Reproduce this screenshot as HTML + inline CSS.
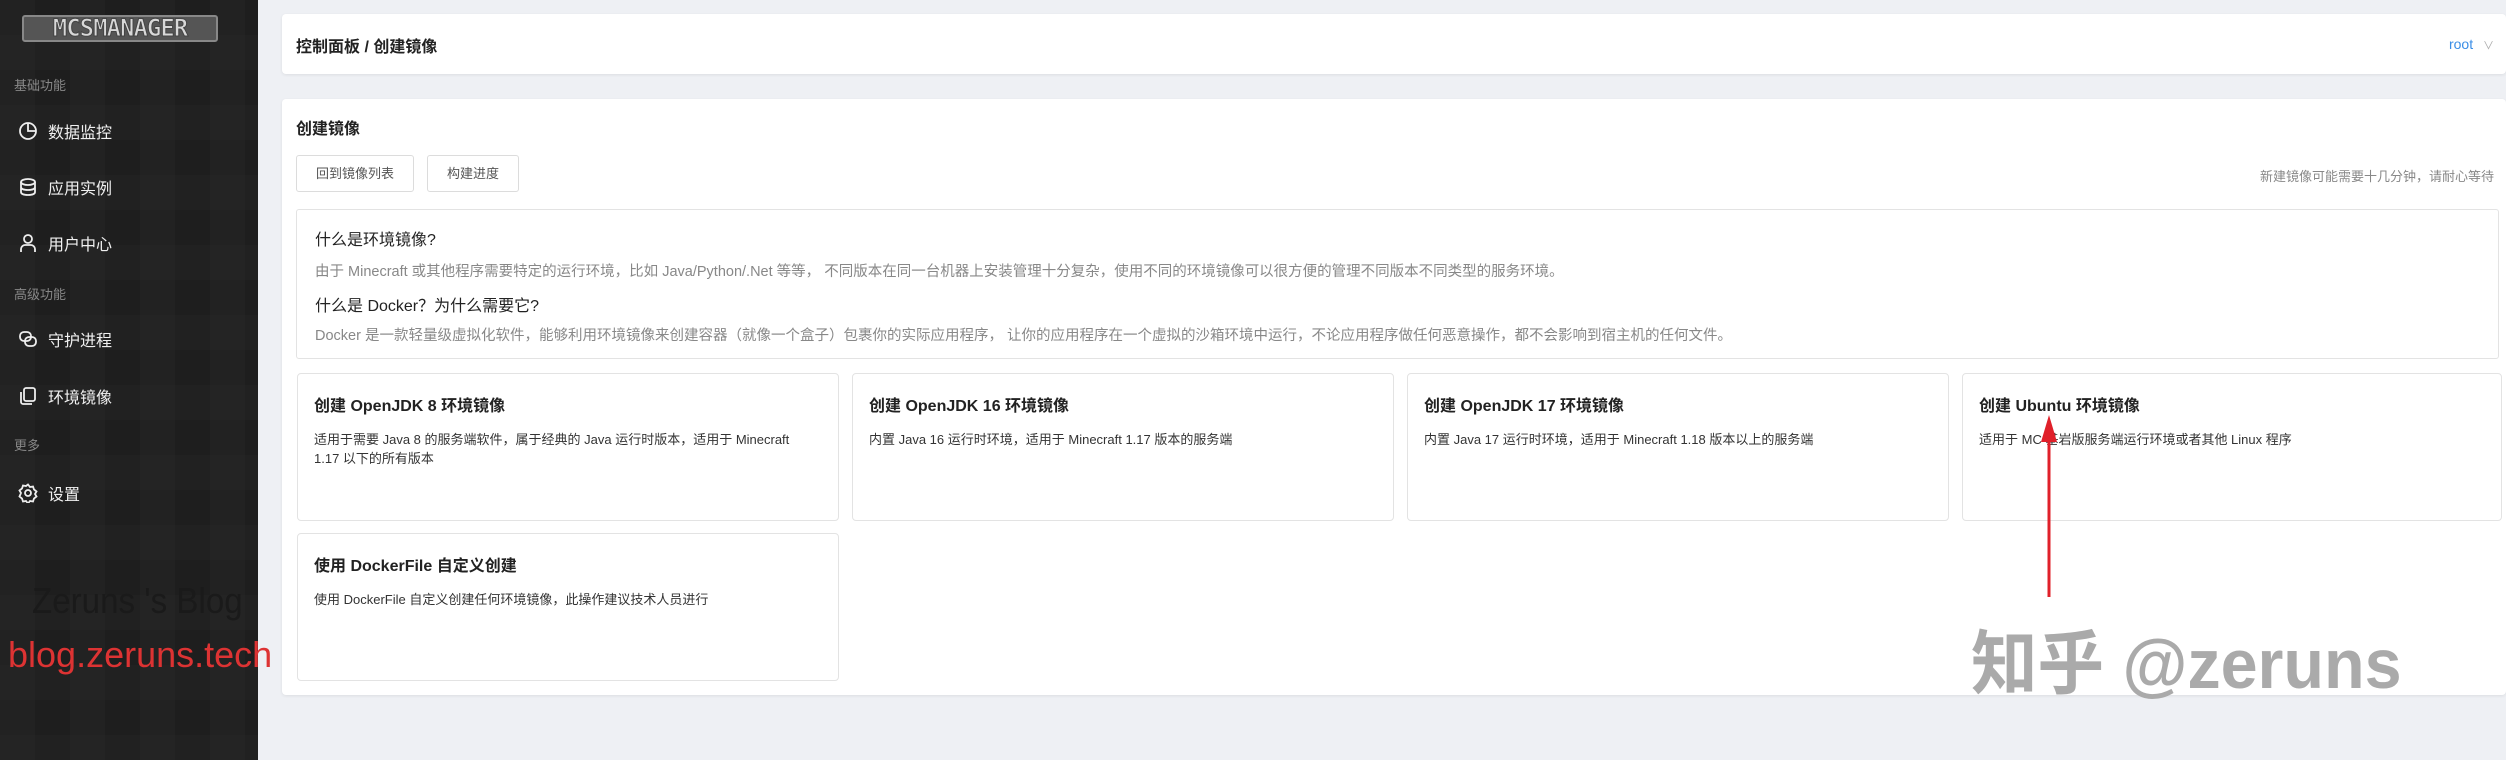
<!DOCTYPE html>
<html><head><meta charset="utf-8"><style>
*{box-sizing:border-box;margin:0;padding:0}
body{width:2506px;height:760px;overflow:hidden;background:#eef0f4;font-family:"Liberation Sans","Noto Sans CJK SC",sans-serif;position:relative}
.side{position:absolute;left:0;top:0;width:258px;height:760px;background:#212121;
background-image:linear-gradient(90deg,rgba(255,255,255,.015) 50%,transparent 50%),linear-gradient(rgba(0,0,0,.08) 50%,transparent 50%);background-size:70px 70px,70px 70px}
.logo{position:absolute;left:22px;top:15px;width:196px;height:27px;background:#555;border:2px solid #888;border-radius:3px;color:#d8d8d8;font:bold 24px "DejaVu Sans Mono",monospace;letter-spacing:-1px;line-height:23px;text-align:center;-webkit-text-stroke:1px #444}
.lab{position:absolute;left:14px;font-size:13px;color:#888}
.mi{position:absolute;left:18px;font-size:16px;color:#f0f0f0;display:flex;align-items:center;gap:10px;height:24px}
.mi svg{width:20px;height:20px;fill:none;stroke:#eee;stroke-width:1.8}
.card{position:absolute;background:#fff;border-radius:4px;box-shadow:0 1px 3px rgba(0,0,0,.08)}
.t{position:absolute;font-weight:bold;font-size:16px;color:#222}
.btn{position:absolute;top:155px;height:37px;border:1px solid #dcdcdc;border-radius:3px;font-size:13px;color:#555;line-height:35px;text-align:center;background:#fff}
.box{position:absolute;left:296px;top:209px;width:2203px;height:150px;border:1px solid #e3e3e3;border-radius:3px;background:#fff}
.h{position:absolute;left:18px;font-size:16px;color:#222}
.p{position:absolute;left:18px;font-size:14.5px;color:#888;white-space:nowrap}
.c{position:absolute;border:1px solid #e3e3e3;border-radius:4px;background:#fff}
.c b{position:absolute;left:16px;top:18px;font-size:16px;color:#222}
.c span{position:absolute;left:16px;top:56px;right:26px;font-size:13px;color:#333;line-height:19px}
</style></head><body>
<div class="side">
<div class="logo">MCSMANAGER</div>
<div class="lab" style="top:75px">基础功能</div>
<div class="mi" style="top:119px"><svg viewBox="0 0 20 20"><circle cx="10" cy="10" r="8"/><path d="M10 2v8h8"/></svg>数据监控</div>
<div class="mi" style="top:175px"><svg viewBox="0 0 20 20"><ellipse cx="10" cy="5" rx="7" ry="3"/><path d="M3 5v10c0 2 3 3 7 3s7-1 7-3V5M3 10c0 2 3 3 7 3s7-1 7-3"/></svg>应用实例</div>
<div class="mi" style="top:231px"><svg viewBox="0 0 20 20"><circle cx="10" cy="6" r="4"/><path d="M3 19v-3c0-2 2-4 4-4h6c2 0 4 2 4 4v3"/></svg>用户中心</div>
<div class="lab" style="top:284px">高级功能</div>
<div class="mi" style="top:327px"><svg viewBox="0 0 20 20"><rect x="2" y="3" width="11" height="9" rx="4"/><rect x="7" y="8" width="11" height="9" rx="4"/></svg>守护进程</div>
<div class="mi" style="top:384px"><svg viewBox="0 0 20 20"><rect x="6" y="2" width="11" height="13" rx="2"/><path d="M3 6v10c0 1 1 2 2 2h9"/></svg>环境镜像</div>
<div class="lab" style="top:435px">更多</div>
<div class="mi" style="top:481px"><svg viewBox="0 0 20 20"><circle cx="10" cy="10" r="3"/><path d="M10 1.5l2 2.5 3-.5 1 3 2.5 2-1.5 2.5 1.5 2.5-2.5 2-1 3-3-.5-2 2.5-2-2.5-3 .5-1-3-2.5-2L3 10 1.5 7.5 4 5.5l1-3 3 .5z"/></svg>设置</div>
</div>
<div style="position:absolute;left:32px;top:580px;font-size:36px;color:#1a1a1a;white-space:nowrap;transform:scaleX(.92);transform-origin:left">Zeruns 's Blog</div>
<div style="position:absolute;left:8px;top:634px;font-size:36px;color:#d33;white-space:nowrap">blog.zeruns.tech</div>

<div class="card" style="left:282px;top:14px;width:2224px;height:60px">
<div class="t" style="left:14px;top:19px;font-size:16px">控制面板 / 创建镜像</div>
<div style="position:absolute;right:12px;top:22px;font-size:14px;color:#3a8ee6">root <span style="font-size:11px;color:#aaa;margin-left:6px">∨</span></div>
</div>

<div class="card" style="left:282px;top:99px;width:2224px;height:596px"></div>
<div class="t" style="left:296px;top:115px">创建镜像</div>
<div class="btn" style="left:296px;width:118px">回到镜像列表</div>
<div class="btn" style="left:427px;width:92px">构建进度</div>
<div style="position:absolute;right:12px;top:166px;font-size:13px;color:#888">新建镜像可能需要十几分钟，请耐心等待</div>
<div class="box">
<div class="h" style="top:16px">什么是环境镜像?</div>
<div class="p" style="top:50px">由于 Minecraft 或其他程序需要特定的运行环境，比如 Java/Python/.Net 等等， 不同版本在同一台机器上安装管理十分复杂，使用不同的环境镜像可以很方便的管理不同版本不同类型的服务环境。</div>
<div class="h" style="top:82px">什么是 Docker？为什么需要它?</div>
<div class="p" style="top:114px">Docker 是一款轻量级虚拟化软件，能够利用环境镜像来创建容器（就像一个盒子）包裹你的实际应用程序， 让你的应用程序在一个虚拟的沙箱环境中运行，不论应用程序做任何恶意操作，都不会影响到宿主机的任何文件。</div>
</div>

<div class="c" style="left:297px;top:373px;width:542px;height:148px"><b>创建 OpenJDK 8 环境镜像</b><span>适用于需要 Java 8 的服务端软件，属于经典的 Java 运行时版本，适用于 Minecraft 1.17 以下的所有版本</span></div>
<div class="c" style="left:852px;top:373px;width:542px;height:148px"><b>创建 OpenJDK 16 环境镜像</b><span>内置 Java 16 运行时环境，适用于 Minecraft 1.17 版本的服务端</span></div>
<div class="c" style="left:1407px;top:373px;width:542px;height:148px"><b>创建 OpenJDK 17 环境镜像</b><span>内置 Java 17 运行时环境，适用于 Minecraft 1.18 版本以上的服务端</span></div>
<div class="c" style="left:1962px;top:373px;width:540px;height:148px"><b>创建 Ubuntu 环境镜像</b><span>适用于 MC 基岩版服务端运行环境或者其他 Linux 程序</span></div>
<div class="c" style="left:297px;top:533px;width:542px;height:148px"><b>使用 DockerFile 自定义创建</b><span>使用 DockerFile 自定义创建任何环境镜像，此操作建议技术人员进行</span></div>

<svg style="position:absolute;left:0;top:0" width="2506" height="760"><path d="M2049 597 L2049 440" stroke="#e0202a" stroke-width="3"/><path d="M2041 442 L2049 415 L2057 442 Z" fill="#e0202a"/></svg>
<div style="position:absolute;left:1971px;top:608px;font-size:70px;color:#aaa;font-weight:bold;white-space:nowrap;transform:scaleX(.95);transform-origin:left">知乎 @zeruns</div>
</body></html>
